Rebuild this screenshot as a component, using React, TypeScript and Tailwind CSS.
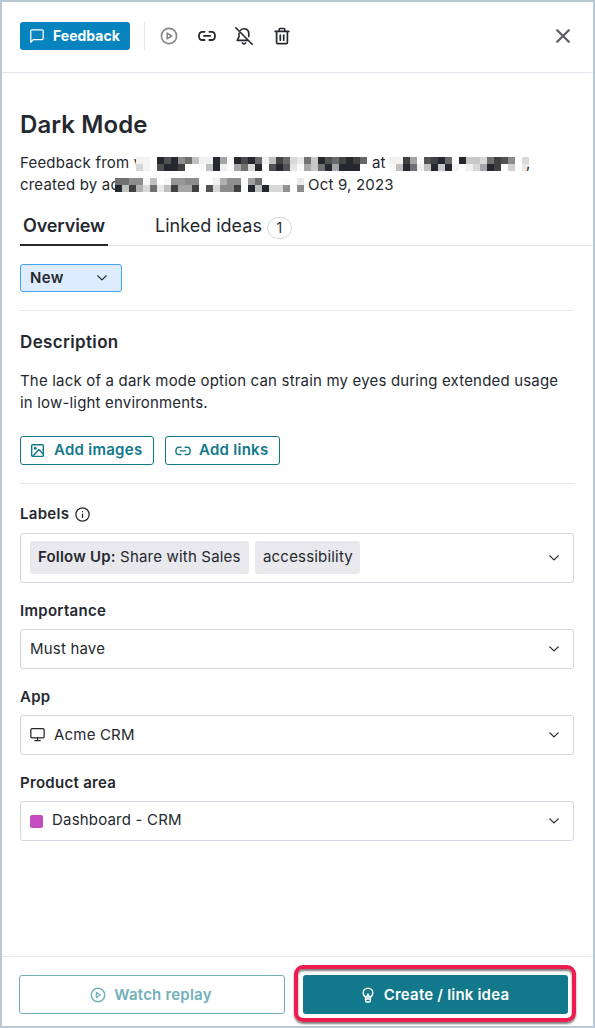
import { ReactNode, useState } from "react";

const NAME_BLOCKS = [
  "f0 f3 ff 25 52 25 8c 70 c0 f0 f0 25 a5 fa 25 4a 25 6a f0 c0 44 6a d8 e8 70 c8 25 52 6a 44 25 40 66",
  "d8 f4 ff 52 25 25 40 ff ff fa c0 25 f0 fa a5 70 d8 25 ff 52 25 52 e4 f8 a5 c8 70 25 a5 25 25 25 ff",
];

const COMPANY_BLOCKS = [
  "f0 f2 40 a5 fa 52 40 25 6a ff 25 c8 c8 d8 70 40 52 8c ff d8",
  "f8 c0 25 70 f0 c0 25 c8 25 f4 ff f0 d8 a5 25 40 ff d0 ff e8",
];

const AUTHOR_BLOCKS = [
  "70 70 8c 8c f8 c0 ff f8 96 96 8c 8c ff ff f0 b0 90 90 ff a0 70 ff ff ff fa ff e8",
  "25 c0 40 b0 d8 70 e8 c0 40 a5 a5 40 ff 52 d8 8c 8c 40 ff 25 c0 25 d8 d8 90 ff 8c",
];

function Mosaic({
  rows,
  className = "",
}: {
  rows: string[];
  className?: string;
}) {
  const columns = rows[0].split(" ").length;

  return (
    <svg
      width={columns * 7}
      height={14}
      shapeRendering="crispEdges"
      className={`shrink-0 ${className}`}
    >
      {rows.map((row, y) =>
        row.split(" ").map((shade, x) => (
          <rect
            key={`${x}-${y}`}
            x={x * 7}
            y={y * 7}
            width={7}
            height={7}
            fill={shade === "25" ? "#25282f" : `#${shade}${shade}${shade}`}
          />
        )),
      )}
    </svg>
  );
}

function Icon({
  size = 18,
  stroke = 1.6,
  className = "",
  children,
}: {
  size?: number;
  stroke?: number;
  className?: string;
  children: ReactNode;
}) {
  return (
    <svg
      width={size}
      height={size}
      viewBox="0 0 18 18"
      fill="none"
      stroke="currentColor"
      strokeWidth={stroke}
      strokeLinecap="round"
      strokeLinejoin="round"
      className={`shrink-0 ${className}`}
    >
      {children}
    </svg>
  );
}

function PlayIcon({ size, stroke }: { size?: number; stroke?: number }) {
  return (
    <Icon size={size} stroke={stroke}>
      <circle cx="9" cy="9" r="7.6" />
      <path d="M7.2 6.2v5.6l4.4-2.8z" />
    </Icon>
  );
}

function LinkIcon({ size, stroke }: { size?: number; stroke?: number }) {
  return (
    <Icon size={size} stroke={stroke}>
      <path d="M6.6 4.8H4.5C2.4 4.8 1 6.4 1 8.9s1.4 4.1 3.5 4.1h2.1M11.4 4.8h2.1c2.1 0 3.500 1.600 3.500 4.100s-1.400 4.100-3.500 4.100h-2.100M6 8.900h6" />
    </Icon>
  );
}

function Chevron({ className = "" }: { className?: string }) {
  return (
    <svg
      width="10"
      height="6"
      viewBox="0 0 10 6"
      fill="none"
      stroke="currentColor"
      strokeWidth="1.3"
      strokeLinecap="round"
      strokeLinejoin="round"
      className={`shrink-0 ${className}`}
    >
      <path d="M0.8 0.9L5 4.9L9.2 0.9" />
    </svg>
  );
}

function Select({
  label,
  tall = false,
  info = false,
  children,
}: {
  label: string;
  tall?: boolean;
  info?: boolean;
  children: ReactNode;
}) {
  return (
    <div className="mb-4.5">
      <div
        className={`flex items-center h-5 gap-1.5 text-[15px] font-semibold tracking-[0.3px] ${
          info ? "mb-[9px]" : "mb-2"
        }`}
      >
        {label}
        {info && (
          <Icon size={15} stroke={1.5}>
            <circle cx="9" cy="9" r="8" />
            <path d="M9 8.5v4M9 5.5v.2" />
          </Icon>
        )}
      </div>
      <button
        type="button"
        className={`flex items-center justify-between w-full pl-[9px] pr-[14px] rounded-[3px] border border-[#d5d6e2] text-left text-[15px] ${
          tall ? "h-[50px]" : "h-10"
        }`}
      >
        <span className="flex items-center">{children}</span>
        <Chevron />
      </button>
    </div>
  );
}

export default function App() {
  const [tab, setTab] = useState<string>("overview");

  return (
    <div className="flex flex-col h-[1028px] w-[595px] border-2 border-[#b9c8d4] bg-white text-[#25282f] font-['Inter',sans-serif]">
      <header className="flex items-center h-[71px] shrink-0 pl-[18px] pr-[22px] pb-[3px] border-b border-[#e5e6ed]">
        <div className="flex items-center w-[110px] h-7 pl-[9px] gap-2 rounded-[3px] bg-[#0783be] text-white text-sm font-bold">
          <Icon size={16} stroke={1.4}>
            <path d="M2 16V3.2C2 2.5 2.5 2 3.2 2h11.6c.7 0 1.2.5 1.2 1.2v8.6c0 .7-.5 1.2-1.2 1.2H5z" />
          </Icon>
          Feedback
        </div>
        <div className="w-px h-7 ml-3.5 bg-[#e5e6ed]" />
        <div className="flex items-center ml-[15px] gap-[19.5px]">
          <button type="button" className="text-[#85868c]">
            <PlayIcon />
          </button>
          <button type="button">
            <LinkIcon stroke={1.8} />
          </button>
          <button type="button">
            <Icon stroke={1.6}>
              <path d="M.8.8l16.4 16.4M5.6 3.2A4.8 4.8 0 0 1 13.8 6.4v3.2M4 6.2v3.6L2.2 13.4h10.6M7.4 15.8a1.7 1.7 0 0 0 3.2 0" />
            </Icon>
          </button>
          <button type="button">
            <Icon stroke={1.7}>
              <path d="M2.2 4.4h13.6M6.2 4.2V2.6c0-.6.4-1.1 1-1.1h3.6c.6 0 1 .5 1 1.1v1.6M3.6 4.6v10.8c0 .8.5 1.3 1.3 1.3h8.2c.8 0 1.3-.5 1.3-1.3V4.6M7.3 8v5.2M10.7 8v5.2" />
            </Icon>
          </button>
        </div>
        <button type="button" className="ml-auto text-[#5b5c66]">
          <Icon size={16} stroke={2.5}>
            <path d="M2.5 2.5l13 13M15.5 2.5l-13 13" />
          </Icon>
        </button>
      </header>

      <div className="pl-[18px] pt-9">
        <h1 className="h-8 text-2xl leading-8 font-semibold tracking-[0.1px]">
          Dark Mode
        </h1>
        <div className="mt-[11px] text-[15px] leading-[22px] tracking-[0.19px]">
          <div className="flex items-center h-[22px] whitespace-pre">
            <span className="w-[116px]">Feedback from v</span>
            <Mosaic rows={NAME_BLOCKS} className="mt-0.5" />
            <span className="w-[17px] ml-[5px]">at</span>
            <Mosaic rows={COMPANY_BLOCKS} className="mt-0.5" />
            <span className="-ml-[3px]">,</span>
          </div>
          <div className="flex items-center h-[22px] whitespace-pre">
            <span className="w-[95px]">created by ac</span>
            <Mosaic rows={AUTHOR_BLOCKS} />
            <span className="ml-1">Oct 9, 2023</span>
          </div>
        </div>
      </div>

      <nav className="flex h-[50px] ml-[18px] shrink-0 border-b border-[#e5e6ed] text-lg">
        <button
          type="button"
          className={`w-[88px] h-[50px] pt-[11px] tracking-[-0.1px] ${
            tab === "overview" ? "border-b-2 border-[#25282f] font-semibold" : ""
          }`}
          onClick={() => setTab("overview")}
        >
          Overview
        </button>
        <button
          type="button"
          className={`flex items-center h-[50px] ml-[47px] pt-[10px] ${
            tab === "linked" ? "border-b-2 border-[#25282f] font-semibold" : ""
          }`}
          onClick={() => setTab("linked")}
        >
          Linked ideas
          <span className="flex items-center justify-center w-[25px] h-[22px] ml-[5px] mt-[3px] rounded-full border border-[#d5d6e2] text-sm">
            1
          </span>
        </button>
      </nav>

      <main className="flex-1 pl-[18px] pr-[19px] pt-[18px] tracking-[0.19px]">
        <button
          type="button"
          className="flex items-center justify-between w-[102px] h-7 pl-[9px] pr-[14px] rounded-[3px] border border-[#45a3fa] bg-[#ddecff] text-[15px] font-semibold tracking-[0.4px]"
        >
          New
          <Chevron />
        </button>

        <section className="mt-[18px] pt-[19px] border-t border-[#e5e6ed]">
          <h2 className="h-6 text-[17px] leading-6 font-semibold tracking-[0.35px]">
            Description
          </h2>
          <p className="mt-4 text-[15px] leading-[22px] tracking-[0.18px] whitespace-nowrap">
            The lack of a dark mode option can strain my eyes during extended
            usage
            <br />
            in low-light environments.
          </p>
          <div className="flex mt-[22px] gap-[11px] text-[15px] font-semibold tracking-[0.27px] text-[#12788b]">
            <button
              type="button"
              className="flex items-center w-[134px] h-[29px] pl-[9px] gap-[9px] rounded-[3px] border border-[#12788b]"
            >
              <Icon size={15} stroke={1.7}>
                <rect x="2" y="2" width="14" height="14" rx="1" />
                <circle cx="6.3" cy="6.3" r="1" fill="currentColor" />
                <path d="M3.6 15.5l7-7.6 5 5" />
              </Icon>
              Add images
            </button>
            <button
              type="button"
              className="flex items-center w-[115px] h-[29px] pl-[9px] gap-2 rounded-[3px] border border-[#12788b]"
            >
              <LinkIcon size={16} />
              Add links
            </button>
          </div>
        </section>

        <section className="mt-[18px] pt-5 border-t border-[#e5e6ed]">
          <Select label="Labels" tall info>
            <span className="flex items-center w-[219px] h-[33px] pl-2 -mt-px rounded-[3px] bg-[#e8e8ed] whitespace-pre">
              <b className="font-semibold">Follow Up:</b> Share with Sales
            </span>
            <span className="flex items-center w-[105px] h-[33px] pl-2 ml-1.5 -mt-px rounded-[3px] bg-[#e8e8ed]">
              accessibility
            </span>
          </Select>
          <Select label="Importance">Must have</Select>
          <Select label="App">
            <Icon size={15} stroke={1.5} className="mr-[9px] -mt-px">
              <rect x="1" y="2" width="16" height="11" rx="1.5" />
              <path d="M9 13v3M5.8 16.2h6.4" />
            </Icon>
            Acme CRM
          </Select>
          <Select label="Product area">
            <span className="size-[13px] mr-[9px] rounded-[2px] bg-[#c44cc0]" />
            <span className="-mt-0.5">Dashboard - CRM</span>
          </Select>
        </section>
      </main>

      <footer className="flex h-[70px] shrink-0 pl-[17px] pt-[18px] border-t border-[#e5e6ed] text-[15px] font-semibold tracking-[0.2px]">
        <button
          type="button"
          className="flex items-center justify-center w-[266px] h-[39px] pt-px pr-0.5 gap-2 rounded-[3px] border border-[#71afb9] text-[#71afb9]"
        >
          <PlayIcon size={16} />
          Watch replay
        </button>
        <div className="w-[282px] h-[57px] ml-[9px] -mt-[10px] px-[5px] pt-1.5 rounded-[9px] border-4 border-[#ec1c50] shadow-[0_2px_2px_rgba(0,0,0,0.5),inset_0_2px_2px_rgba(0,0,0,0.5)]">
          <button
            type="button"
            className="flex items-center justify-center w-[265px] h-[39px] pt-px pr-0.5 gap-2 rounded-[3px] bg-[#12788b] text-white"
          >
            <Icon size={16} stroke={1.7}>
              <path d="M6.3 11.2C4.6 10.3 3.6 8.9 3.6 6.700a5.400 5.400 0 0 1 10.800 0c0 2.200-1 3.600-2.700 4.500M6.300 11.200v4c0 1 .7 1.700 1.600 1.700h2.200c.9 0 1.600-.7 1.600-1.700v-4M6.300 13.600h5.400" />
              <path d="M9 8l1.500 3.200h-3z" fill="currentColor" />
            </Icon>
            Create / link idea
          </button>
        </div>
      </footer>
    </div>
  );
}
